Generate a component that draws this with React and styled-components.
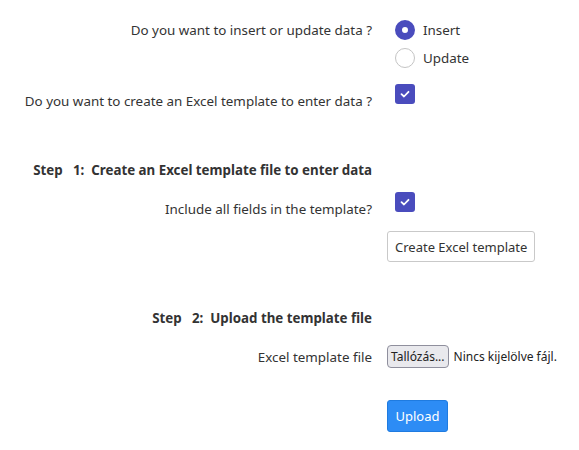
import React, { useState } from "react";
import styled, { createGlobalStyle } from "styled-components";

const GlobalStyle = createGlobalStyle`
  body {
    margin: 0;
    background: #fff;
    font-family: "Noto Sans", "Open Sans", sans-serif;
    font-size: 13.4px;
    color: #333;
  }
`;

const Form = styled.form`
  display: flex;
  flex-direction: column;
  padding-top: 20px;
`;

const Row = styled.div`
  display: grid;
  grid-template-columns: 372px 1fr;
  column-gap: 15px;
  align-items: start;
  margin-top: ${(p) => p.$mt || 0}px;
`;

const Label = styled.div`
  text-align: right;
  line-height: 20px;
  padding-top: ${(p) => p.$pt || 0}px;
  white-space: pre;
`;

const Heading = styled(Label)`
  font-weight: 700;
  font-size: 13.32px;
  color: #333;
`;

const Controls = styled.div`
  display: flex;
  flex-direction: column;
  gap: 8px;
  padding-left: 8px;
`;

const Option = styled.label`
  display: flex;
  align-items: center;
  gap: 8px;
  line-height: 20px;
  cursor: pointer;
`;

const RadioDot = styled.span`
  box-sizing: border-box;
  width: 20px;
  height: 20px;
  border-radius: 50%;
  border: ${(p) => (p.$checked ? "7px solid #4a4cbd" : "1px solid #c4c4c4")};
  background: #fff;
`;

const CheckBox = styled.span`
  display: flex;
  align-items: center;
  justify-content: center;
  width: 20px;
  height: 20px;
  border-radius: 3px;
  background: #4a4cbd;
  cursor: pointer;
`;

const Button = styled.button`
  font-family: inherit;
  font-size: 13px;
  color: #333;
  background: #fff;
  border: 1px solid #c9c9c9;
  border-radius: 3px;
  height: 31px;
  padding: 0 7px;
  cursor: pointer;
`;

const PrimaryButton = styled(Button)`
  background: #2d8cf5;
  border-color: #1f7be0;
  color: #fff;
  width: 61px;
  height: 32px;
  padding: 0;
`;

const FileRow = styled.div`
  display: flex;
  align-items: center;
  gap: 5px;
`;

const FileButton = styled.button`
  font-family: inherit;
  font-size: 12px;
  color: #222;
  background: #e9e9ed;
  border: 1px solid #8f8f9d;
  border-radius: 4px;
  height: 23px;
  padding: 0 3px;
`;

const FileText = styled.span`
  color: #222;
  font-size: 12px;
`;

function Check() {
  return (
    <svg width="12" height="12" viewBox="0 0 12 12">
      <polyline points="2.5,6.2 5,8.5 9.5,3.8" fill="none" stroke="#fff" strokeWidth="1.8" strokeLinecap="round" strokeLinejoin="round" />
    </svg>
  );
}

export default function App() {
  const [mode, setMode] = useState("insert");
  const [makeTemplate, setMakeTemplate] = useState(true);
  const [allFields, setAllFields] = useState(true);

  return (
    <>
      <GlobalStyle />
      <Form onSubmit={(e) => e.preventDefault()}>
        <Row>
          <Label>Do you want to insert or update data ?</Label>
          <Controls>
            <Option onClick={() => setMode("insert")}>
              <RadioDot $checked={mode === "insert"} />
              Insert
            </Option>
            <Option onClick={() => setMode("update")}>
              <RadioDot $checked={mode === "update"} />
              Update
            </Option>
          </Controls>
        </Row>

        <Row $mt={16}>
          <Label $pt={7}>Do you want to create an Excel template to enter data ?</Label>
          <Controls>
            <CheckBox onClick={() => setMakeTemplate(!makeTemplate)}>{makeTemplate && <Check />}</CheckBox>
          </Controls>
        </Row>

        <Row $mt={49}>
          <Heading>{"Step   1:  Create an Excel template file to enter data"}</Heading>
        </Row>

        <Row $mt={12}>
          <Label $pt={7}>Include all fields in the template?</Label>
          <Controls>
            <CheckBox onClick={() => setAllFields(!allFields)}>{allFields && <Check />}</CheckBox>
          </Controls>
        </Row>

        <Row $mt={12}>
          <div />
          <div>
            <Button type="button">Create Excel template</Button>
          </div>
        </Row>

        <Row $mt={46}>
          <Heading>{"Step   2:  Upload the template file"}</Heading>
        </Row>

        <Row $mt={17}>
          <Label $pt={2}>Excel template file</Label>
          <FileRow>
            <FileButton type="button">Tallózás...</FileButton>
            <FileText>Nincs kijelölve fájl.</FileText>
          </FileRow>
        </Row>

        <Row $mt={32}>
          <div />
          <div>
            <PrimaryButton type="submit">Upload</PrimaryButton>
          </div>
        </Row>
      </Form>
    </>
  );
}
